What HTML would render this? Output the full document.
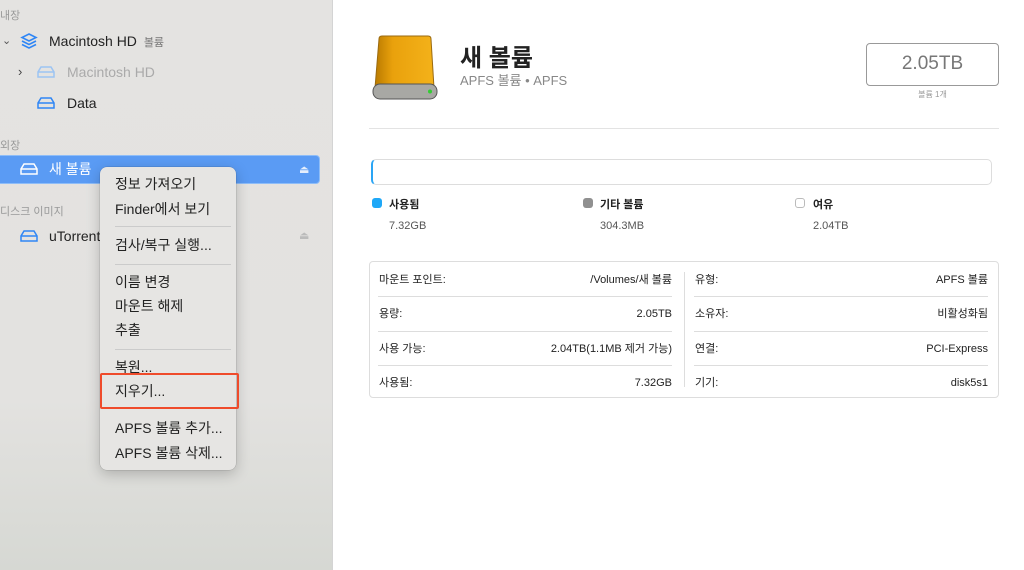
<!DOCTYPE html>
<html><head><meta charset="utf-8"><style>
*{margin:0;padding:0;box-sizing:border-box}
body{width:1024px;height:570px;overflow:hidden;font-family:"Liberation Sans","Noto Sans CJK KR",sans-serif;background:#fff;position:relative;color:#222}
.side{position:absolute;left:0;top:0;width:333px;height:570px;background:linear-gradient(#e4e3e1 0%,#e3e2e0 70%,#d6d8d3 100%);border-right:1px solid #d4d4d4}
.a{position:absolute;white-space:nowrap}
.h{font-size:11px;color:#999;font-weight:normal}
.t{font-size:14px;line-height:17px}
.menu{position:absolute;left:100px;top:167px;width:136px;height:303px;background:#e6e5e3;border-radius:7px;box-shadow:0 4px 14px rgba(0,0,0,.22),0 0 0 .5px rgba(0,0,0,.15)}
.menu .a{font-size:14px;left:15px;color:#222;line-height:17px}
.sep{position:absolute;left:15px;width:116px;height:1px;background:#cbcbcb}
.inf .a{line-height:14px}
</style></head><body>
<div class="side">
<div class="a h" style="left:0;top:7px">내장</div>
<div class="a" style="left:2px;top:34px;font-size:11px;color:#555">⌄</div>
<svg class="a" style="left:20px;top:32px" width="18" height="18" viewBox="0 0 18 18" fill="none" stroke="#2f86f5" stroke-width="1.6"><path d="M9 2 L16 5.5 L9 9 L2 5.5Z"/><path d="M2 9 L9 12.5 L16 9"/><path d="M2 12.5 L9 16 L16 12.5"/></svg>
<div class="a t" style="left:49px;top:33px">Macintosh HD <span style="font-size:11px;color:#777;margin-left:3px">볼륨</span></div>
<div class="a" style="left:18px;top:64px;font-size:13px;color:#444">›</div>
<svg class="a" style="left:37px;top:66px" width="18" height="12" viewBox="0 0 18 12" fill="none" stroke="#9cc4f3" stroke-width="1.5"><path d="M4 1h10l3 5v5H1V6z"/><path d="M1 6h16"/></svg>
<div class="a t" style="left:67px;top:64px;color:#aaa">Macintosh HD</div>
<svg class="a" style="left:37px;top:97px" width="18" height="12" viewBox="0 0 18 12" fill="none" stroke="#2f86f5" stroke-width="1.5"><path d="M4 1h10l3 5v5H1V6z"/><path d="M1 6h16"/></svg>
<div class="a t" style="left:67px;top:95px">Data</div>
<div class="a h" style="left:0;top:137px">외장</div>
<div class="a" style="left:-4px;top:155px;width:324px;height:29px;background:#5a9bf4;border-radius:4px;border:1.5px solid #8ebdf8"></div>
<svg class="a" style="left:20px;top:163px" width="18" height="12" viewBox="0 0 18 12" fill="none" stroke="#fff" stroke-width="1.5"><path d="M4 1h10l3 5v5H1V6z"/><path d="M1 6h16"/></svg>
<div class="a t" style="left:49px;top:161px;color:#fff">새 볼륨</div>
<div class="a" style="left:299px;top:163px;font-size:11px;color:#e4eefc">⏏</div>
<div class="a h" style="left:0;top:203px">디스크 이미지</div>
<svg class="a" style="left:20px;top:230px" width="18" height="12" viewBox="0 0 18 12" fill="none" stroke="#2f86f5" stroke-width="1.5"><path d="M4 1h10l3 5v5H1V6z"/><path d="M1 6h16"/></svg>
<div class="a t" style="left:49px;top:228px">uTorrent</div>
<div class="a" style="left:299px;top:229px;font-size:11px;color:#bbb">⏏</div>
</div>
<div class="menu">
<div class="a" style="top:9px">정보 가져오기</div>
<div class="a" style="top:34px">Finder에서 보기</div>
<div class="sep" style="top:59px"></div>
<div class="a" style="top:70px">검사/복구 실행...</div>
<div class="sep" style="top:97px"></div>
<div class="a" style="top:107px">이름 변경</div>
<div class="a" style="top:131px">마운트 해제</div>
<div class="a" style="top:155px">추출</div>
<div class="sep" style="top:182px"></div>
<div class="a" style="top:192px">복원...</div>
<div class="a" style="top:216px">지우기...</div>
<div class="a" style="top:253px">APFS 볼륨 추가...</div>
<div class="a" style="top:278px">APFS 볼륨 삭제...</div>
</div>
<div class="a" style="left:100px;top:373px;width:139px;height:36px;border:2.5px solid #ef4b2b;border-radius:2px"></div>

<svg class="a" style="left:370px;top:34px" width="70" height="68" viewBox="0 0 70 68"><defs><linearGradient id="g" x1="0" x2="1"><stop offset="0" stop-color="#b97a00"/><stop offset=".3" stop-color="#e9a10c"/><stop offset="1" stop-color="#f4b21a"/></linearGradient></defs><path d="M12 2h46q3 0 3 3l3 49H5l4-49q0-3 3-3z" fill="url(#g)" stroke="#9a6a10" stroke-width="1"/><rect x="3" y="50" width="64" height="15" rx="7" fill="#a8a8a4" stroke="#555" stroke-width="1"/><circle cx="60" cy="57.5" r="2" fill="#3c3"/></svg>
<div class="a" style="left:460px;top:38px;font-size:24px;font-weight:bold;color:#222">새 볼륨</div>
<div class="a" style="left:460px;top:70px;font-size:13px;color:#888">APFS 볼륨 • APFS</div>
<div class="a" style="left:866px;top:43px;width:133px;height:43px;border:1.5px solid #999;border-radius:4px;text-align:center;font-size:19px;line-height:40px;color:#777">2.05TB</div>
<div class="a" style="left:866px;top:89px;width:133px;text-align:center;font-size:8px;color:#999">볼륨 1개</div>
<div class="a" style="left:369px;top:128px;width:630px;height:1px;background:#e3e3e3"></div>
<div class="a" style="left:371px;top:159px;width:621px;height:26px;border:1px solid #ddd;border-radius:5px;border-left:2px solid #2aa5f5"></div>
<div class="a" style="left:372px;top:198px;width:10px;height:10px;border-radius:3px;background:#1fa8f7"></div>
<div class="a" style="left:389px;top:196px;font-size:11px;font-weight:bold">사용됨</div>
<div class="a" style="left:389px;top:220px;font-size:11px;color:#555">7.32GB</div>
<div class="a" style="left:583px;top:198px;width:10px;height:10px;border-radius:3px;background:#909090"></div>
<div class="a" style="left:600px;top:196px;font-size:11px;font-weight:bold">기타 볼륨</div>
<div class="a" style="left:600px;top:220px;font-size:11px;color:#555">304.3MB</div>
<div class="a" style="left:795px;top:198px;width:10px;height:10px;border-radius:3px;border:1px solid #bbb"></div>
<div class="a" style="left:813px;top:196px;font-size:11px;font-weight:bold">여유</div>
<div class="a" style="left:813px;top:220px;font-size:11px;color:#555">2.04TB</div>

<div class="a" style="left:369px;top:261px;width:630px;height:137px;border:1px solid #ddd;border-radius:4px"></div>
<div class="a" style="left:684px;top:272px;width:1px;height:115px;background:#ddd"></div>
<div class="a" style="left:378px;top:296px;width:294px;height:1px;background:#ddd"></div>
<div class="a" style="left:378px;top:331px;width:294px;height:1px;background:#ddd"></div>
<div class="a" style="left:378px;top:365px;width:294px;height:1px;background:#ddd"></div>
<div class="a" style="left:694px;top:296px;width:294px;height:1px;background:#ddd"></div>
<div class="a" style="left:694px;top:331px;width:294px;height:1px;background:#ddd"></div>
<div class="a" style="left:694px;top:365px;width:294px;height:1px;background:#ddd"></div>
<div class="inf" style="font-size:11px">
<div class="a" style="left:379px;top:273px">마운트 포인트:</div><div class="a" style="right:352px;top:273px">/Volumes/새 볼륨</div>
<div class="a" style="left:379px;top:307px">용량:</div><div class="a" style="right:352px;top:307px">2.05TB</div>
<div class="a" style="left:379px;top:342px">사용 가능:</div><div class="a" style="right:352px;top:342px">2.04TB(1.1MB 제거 가능)</div>
<div class="a" style="left:379px;top:376px">사용됨:</div><div class="a" style="right:352px;top:376px">7.32GB</div>
<div class="a" style="left:695px;top:273px">유형:</div><div class="a" style="right:36px;top:273px">APFS 볼륨</div>
<div class="a" style="left:695px;top:307px">소유자:</div><div class="a" style="right:36px;top:307px">비활성화됨</div>
<div class="a" style="left:695px;top:342px">연결:</div><div class="a" style="right:36px;top:342px">PCI-Express</div>
<div class="a" style="left:695px;top:376px">기기:</div><div class="a" style="right:36px;top:376px">disk5s1</div>
</div>
</body></html>
